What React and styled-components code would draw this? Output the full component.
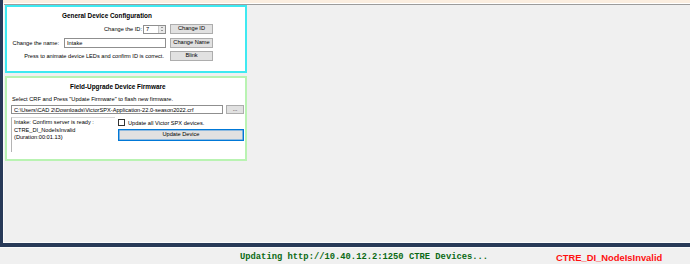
import React from 'react';
import styled, { createGlobalStyle } from 'styled-components';

const Global = createGlobalStyle`
  html, body { margin: 0; padding: 0; background: #f0f0f0; }
  body { font-family: "Liberation Sans", Arial, sans-serif; color: #000; }
  * { box-sizing: border-box; }
`;

const Window = styled.div`
  width: 690px;
  height: 264px;
  display: flex;
  flex-direction: column;
  background: #f0f0f0;
  overflow: hidden;
`;

const Workspace = styled.div`
  height: 247px;
  flex: none;
  display: flex;
  flex-direction: column;
  border-left: 3px solid #283a58;
  border-bottom: 4px solid #283a58;
`;

const PeachStrip = styled.div`
  height: 3px;
  flex: none;
  background: #fbeee0;
`;

const Frame = styled.div`
  flex: 1;
  display: flex;
  flex-direction: column;
  border-top: 1px solid #ffffff;
  border-left: 1px solid #fbfbfb;
  border-bottom: 1px solid #fbfbfb;
`;

const Content = styled.div`
  flex: 1;
  border-top: 1px solid #9c9c9c;
  padding: 0 0 0 1px;
  background: #f0f0f0;
`;

const PanelStack = styled.div`
  width: 242px;
  display: flex;
  flex-direction: column;
  gap: 3px;
`;

const Panel = styled.section`
  height: ${p => p.$h}px;
  background: #ffffff;
  border: 2px solid ${p => p.$border};
  display: flex;
  flex-direction: column;
  font-size: 5.65px;
  line-height: 8px;
`;

const Title = styled.div`
  height: 8px;
  margin-top: 5px;
  padding-left: ${p => p.$indent}px;
  font-weight: bold;
  font-size: 6.4px;
  white-space: nowrap;
`;

const ConfigRows = styled.div`
  display: flex;
  flex-direction: column;
  gap: 3.5px;
  margin-top: 4px;
  padding-right: 32px;
`;

const Row = styled.div`
  display: flex;
  justify-content: flex-end;
  align-items: center;
  height: 10px;
  white-space: nowrap;
`;

const Label = styled.span`
  margin-right: ${p => p.$gap}px;
`;

const Button = styled.button`
  width: ${p => p.$w}px;
  height: ${p => p.$h || 10}px;
  margin-left: ${p => p.$gap || 0}px;
  padding: 0;
  font: inherit;
  font-size: 5.65px;
  line-height: 1;
  color: #000;
  background: #e1e1e1;
  border: 1px solid ${p => (p.$focused ? '#0078d7' : '#adadad')};
  box-shadow: ${p => (p.$focused ? 'inset 0 0 0 0.6px #3d93de' : 'none')};
  border-radius: 0;
  flex: none;
`;

const TextField = styled.input`
  width: ${p => p.$w}px;
  height: ${p => p.$h || 10}px;
  padding: 0 0 0 2px;
  font: inherit;
  font-size: 5.65px;
  color: #000;
  background: #fff;
  border: 1px solid #8f8f8f;
  border-radius: 0;
  outline: none;
  flex: none;
`;

const Spinner = styled.div`
  width: 23px;
  height: 9px;
  display: flex;
  border: 1px solid #8f8f8f;
  background: #fff;
  flex: none;
`;

const SpinValue = styled.span`
  flex: 1;
  padding-left: 2px;
  line-height: 7px;
`;

const SpinArrows = styled.div`
  width: 7px;
  display: flex;
  flex-direction: column;
  background: #e8e8e8;
  border-left: 1px solid #c8c8c8;
`;

const SpinArrow = styled.div`
  flex: 1;
  display: flex;
  align-items: center;
  justify-content: center;
  &::after {
    content: '';
    border-left: 1.5px solid transparent;
    border-right: 1.5px solid transparent;
    ${p => (p.$up ? 'border-bottom: 1.5px solid #444;' : 'border-top: 1.5px solid #444;')}
  }
`;

const Description = styled.div`
  height: 8px;
  margin-top: 4px;
  padding-left: 5px;
  white-space: nowrap;
`;

const PathRow = styled.div`
  display: flex;
  align-items: center;
  gap: 3px;
  margin-top: 2px;
  padding: 0 1px 0 4px;
  height: 9px;
`;

const LowerArea = styled.div`
  display: flex;
  gap: 3px;
  margin-top: 3px;
  padding: 0 1px 0 4px;
`;

const LogBox = styled.div`
  width: 104px;
  height: 35px;
  border-left: 1px solid #b4b4b4;
  border-top: 1px solid #d8d8d8;
  padding: 1px 0 0 2px;
  line-height: 7.5px;
  white-space: nowrap;
`;

const SideColumn = styled.div`
  flex: 1;
  display: flex;
  flex-direction: column;
  gap: 3px;
  padding-top: 2px;
`;

const CheckRow = styled.label`
  display: flex;
  align-items: center;
  gap: 3px;
  height: 7px;
  white-space: nowrap;
`;

const CheckBox = styled.span`
  width: 7px;
  height: 7px;
  border: 1px solid #333;
  background: #fff;
  flex: none;
`;

const StatusBar = styled.div`
  flex: 1;
  display: grid;
  grid-template-columns: 240px 316px auto;
  align-items: center;
  border-top: 1px solid #fafafa;
  padding-top: 2px;
`;

const StatusMessage = styled.span`
  grid-column: 2;
  font-family: "Liberation Mono", "DejaVu Sans Mono", monospace;
  font-weight: bold;
  font-size: 8.8px;
  color: #0b6a14;
  white-space: nowrap;
`;

const StatusError = styled.span`
  grid-column: 3;
  font-family: "Liberation Sans", Arial, sans-serif;
  font-weight: bold;
  font-size: 9.4px;
  color: #ff1010;
  white-space: nowrap;
`;

export default function App() {
  return (
    <Window>
      <Global />
      <Workspace>
        <PeachStrip />
        <Frame>
          <Content>
            <PanelStack>
              <Panel $h={68} $border="#3ee9f1">
                <Title $indent={55}>General Device Configuration</Title>
                <ConfigRows>
                  <Row>
                    <Label $gap={1}>Change the ID:</Label>
                    <Spinner>
                      <SpinValue>7</SpinValue>
                      <SpinArrows>
                        <SpinArrow $up />
                        <SpinArrow />
                      </SpinArrows>
                    </Spinner>
                    <Button $w={43} $gap={4}>Change ID</Button>
                  </Row>
                  <Row>
                    <Label $gap={5}>Change the name:</Label>
                    <TextField $w={102} readOnly defaultValue="Intake" />
                    <Button $w={43} $gap={4}>Change Name</Button>
                  </Row>
                  <Row>
                    <Label $gap={6}>Press to animate device LEDs and confirm ID is correct.</Label>
                    <Button $w={43}>Blink</Button>
                  </Row>
                </ConfigRows>
              </Panel>
              <Panel $h={85} $border="#b9f3b2">
                <Title $indent={63}>Field-Upgrade Device Firmware</Title>
                <Description>Select CRF and Press "Update Firmware" to flash new firmware.</Description>
                <PathRow>
                  <TextField
                    $w={212}
                    $h={9}
                    readOnly
                    defaultValue={'C:\\Users\\CAD 2\\Downloads\\VictorSPX-Application-22.0-season2022.crf'}
                  />
                  <Button $w={18} $h={9}>...</Button>
                </PathRow>
                <LowerArea>
                  <LogBox>
                    <div>Intake: Confirm server is ready :</div>
                    <div>CTRE_DI_NodeIsInvalid</div>
                    <div>(Duration:00:01.13)</div>
                  </LogBox>
                  <SideColumn>
                    <CheckRow>
                      <CheckBox />
                      Update all Victor SPX devices.
                    </CheckRow>
                    <Button $w={126} $h={12} $focused>Update Device</Button>
                  </SideColumn>
                </LowerArea>
              </Panel>
            </PanelStack>
          </Content>
        </Frame>
      </Workspace>
      <StatusBar>
        <StatusMessage>Updating http://10.40.12.2:1250 CTRE Devices...</StatusMessage>
        <StatusError>CTRE_DI_NodeIsInvalid</StatusError>
      </StatusBar>
    </Window>
  );
}
